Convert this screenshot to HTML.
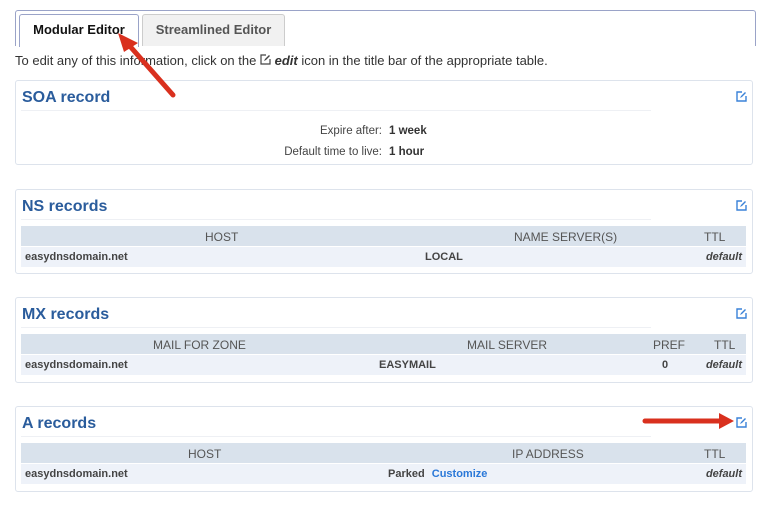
<!DOCTYPE html><html><head><style>
body{margin:0;width:768px;height:508px;background:#fff;font-family:"Liberation Sans",sans-serif;position:relative;overflow:hidden;color:#333}
.a{position:absolute}
.panel{position:absolute;left:15px;width:736px;border:1px solid #dde3ec;border-radius:3px;background:#fff}
.title{position:absolute;left:6px;top:8px;font-size:16px;font-weight:bold;color:#2a5c9c}
.tl{position:absolute;left:5px;top:29px;width:630px;border-top:1px solid #eef0f4}
.ed{position:absolute;right:5px;top:10px}
.hdr{position:absolute;left:5px;width:725px;height:20px;background:#d9e2ec;font-size:12px;color:#555}
.row{position:absolute;left:5px;width:725px;height:20px;background:#eef2f9;font-size:11px;font-weight:bold;color:#444}
.hdr span,.row span{position:absolute;top:4px}
</style></head><body>
<div class="a" style="left:15px;top:10px;width:739px;height:35px;border:1px solid #9aa3c8;border-bottom:none;border-radius:3px 3px 0 0"></div>
<div class="a" style="left:19px;top:14px;width:118px;height:32px;border:1px solid #9aa3c8;border-bottom:none;background:#fff;border-radius:3px 3px 0 0;font-size:13px;font-weight:bold;color:#111;text-align:center;line-height:30px">Modular Editor</div>
<div class="a" style="left:142px;top:14px;width:141px;height:31px;border:1px solid #ccc;border-bottom:none;background:#f1f1f1;border-radius:3px 3px 0 0;font-size:13px;font-weight:bold;color:#555;text-align:center;line-height:30px">Streamlined Editor</div>
<div class="a" style="left:15px;top:53px;font-size:13px;color:#333;white-space:nowrap">To edit any of this information, click on the <svg width="11" height="11" viewBox="0 0 11 11"><path d="M6 1H1v9h9V5" fill="none" stroke="#444" stroke-width="1.2"/><path d="M4 7l1-2 4-4 1 1-4 4z" fill="#444"/></svg> <b><i>edit</i></b> icon in the title bar of the appropriate table.</div>

<div class="panel" style="top:80px;height:83px"><div class="title">SOA record</div><div class="tl"></div><svg class="ed" width="11" height="11" viewBox="0 0 11 11"><path d="M6 1H1v9h9V5" fill="none" stroke="#3a82d8" stroke-width="1.4"/><path d="M4 7l1-2 4-4 1 1-4 4z" fill="#3a82d8"/></svg>
<div class="a" style="left:0;width:366px;text-align:right;top:40px;font-size:11.5px;color:#444;line-height:21px">Expire after:<br>Default time to live:</div>
<div class="a" style="left:373px;top:40px;font-size:11.5px;font-weight:bold;color:#333;line-height:21px">1 week<br>1 hour</div></div>

<div class="panel" style="top:189px;height:83px"><div class="title">NS records</div><div class="tl"></div><svg class="ed" width="11" height="11" viewBox="0 0 11 11"><path d="M6 1H1v9h9V5" fill="none" stroke="#3a82d8" stroke-width="1.4"/><path d="M4 7l1-2 4-4 1 1-4 4z" fill="#3a82d8"/></svg>
<div class="hdr" style="top:36px"><span style="left:184px">HOST</span><span style="left:493px">NAME SERVER(S)</span><span style="left:683px">TTL</span></div>
<div class="row" style="top:57px"><span style="left:4px">easydnsdomain.net</span><span style="left:404px">LOCAL</span><span style="right:4px;font-style:italic">default</span></div></div>

<div class="panel" style="top:297px;height:84px"><div class="title">MX records</div><div class="tl"></div><svg class="ed" width="11" height="11" viewBox="0 0 11 11"><path d="M6 1H1v9h9V5" fill="none" stroke="#3a82d8" stroke-width="1.4"/><path d="M4 7l1-2 4-4 1 1-4 4z" fill="#3a82d8"/></svg>
<div class="hdr" style="top:36px"><span style="left:132px">MAIL FOR ZONE</span><span style="left:446px">MAIL SERVER</span><span style="left:632px">PREF</span><span style="left:693px">TTL</span></div>
<div class="row" style="top:57px"><span style="left:4px">easydnsdomain.net</span><span style="left:358px">EASYMAIL</span><span style="left:641px">0</span><span style="right:4px;font-style:italic">default</span></div></div>

<div class="panel" style="top:406px;height:84px"><div class="title">A records</div><div class="tl"></div><svg class="ed" width="11" height="11" viewBox="0 0 11 11"><path d="M6 1H1v9h9V5" fill="none" stroke="#3a82d8" stroke-width="1.4"/><path d="M4 7l1-2 4-4 1 1-4 4z" fill="#3a82d8"/></svg>
<div class="hdr" style="top:36px"><span style="left:167px">HOST</span><span style="left:491px">IP ADDRESS</span><span style="left:683px">TTL</span></div>
<div class="row" style="top:57px"><span style="left:4px">easydnsdomain.net</span><span style="left:367px">Parked <span style="position:static;color:#2a78d8;margin-left:4px">Customize</span></span><span style="right:4px;font-style:italic">default</span></div></div>

<svg class="a" style="left:0;top:0" width="768" height="508">
<line x1="173" y1="95" x2="128" y2="44" stroke="#d9301e" stroke-width="5" stroke-linecap="round"/>
<polygon points="118,33 138,43 124,52" fill="#d9301e"/>
<line x1="645" y1="421" x2="722" y2="421" stroke="#d9301e" stroke-width="5" stroke-linecap="round"/>
<polygon points="734,421 719,413 719,429" fill="#d9301e"/>
</svg>
</body></html>
